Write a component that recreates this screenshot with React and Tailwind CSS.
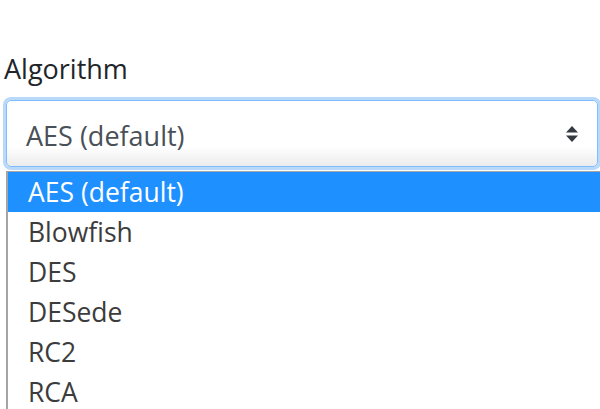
import React from "react";

const OPCIONES = ["AES (default)", "Blowfish", "DES", "DESede", "RC2", "RCA"];

const Flechas = () => (
  <svg width="14" height="18" viewBox="0 0 14 18" className="shrink-0">
    <path d="M7 1 L13 7.5 L1 7.5 Z" fill="#343a40" />
    <path d="M7 17 L13 10.5 L1 10.5 Z" fill="#343a40" />
  </svg>
);

export default function App() {
  return (
    <div
      className="w-[600px] h-[409px] overflow-hidden bg-white"
      style={{ fontFamily: '"Open Sans", "Noto Sans", sans-serif' }}
    >
      {/* Label */}
      <div className="pl-[4px] pt-[51px] text-[27px] leading-[36px] text-[#212529]">
        Algorithm
      </div>

      {/* Select */}
      <div className="mt-[13px] ml-[6px] w-[592px] h-[67px] rounded-[5px] border border-[#80bdff] shadow-[0_0_0_3px_#b9d9fb] bg-gradient-to-b from-white from-70% to-[#ececec] flex items-center pl-[19px] pr-[18px] text-[27px] text-[#495057]">
        <span className="flex-1 pt-[6px]">AES (default)</span>
        <Flechas />
      </div>

      {/* Lista desplegada */}
      <div className="mt-[4px] ml-[6px] w-[600px] border-l-2 border-t border-[#a5a5a5] bg-white">
        {OPCIONES.map((op, i) => (
          <div
            key={op}
            className={
              i === 0
                ? "h-[40px] flex items-center pl-[20px] pt-[2px] text-[26.5px] bg-[#1e90ff] text-white"
                : "h-[40px] flex items-center pl-[20px] pt-[2px] text-[26.5px] text-[#3c3c3c]"
            }
          >
            {op}
          </div>
        ))}
      </div>
    </div>
  );
}
